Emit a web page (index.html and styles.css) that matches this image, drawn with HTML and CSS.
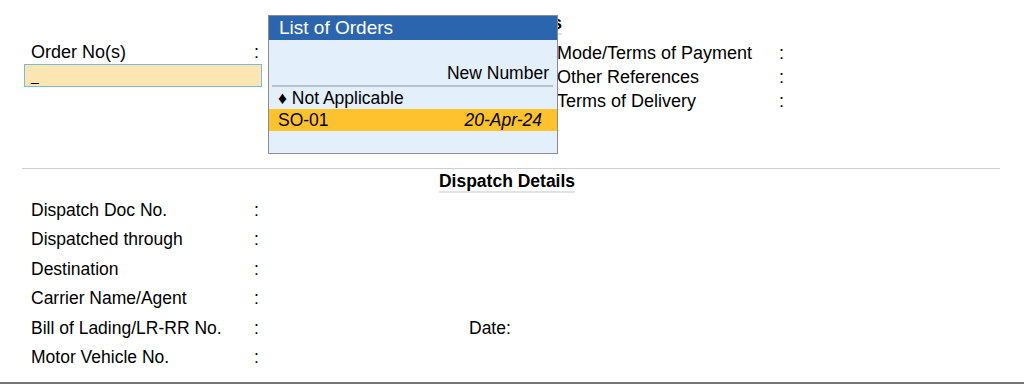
FILE: index.html
```html
<!DOCTYPE html>
<html>

<head>
    <meta charset="UTF-8">
    <title>Order Details</title>
    <link rel="stylesheet" href="styles.css">
</head>

<body>
    <div class="voucher">
        <div class="order-section">
            <div class="section-title"><span>Order Details</span></div>
            <div class="order-cols">
                <div class="order-left">
                    <div class="field">
                        <span class="label">Order No(s)</span>
                        <span class="colon">:</span>
                    </div>
                    <div class="input-box"><span class="cursor">_</span></div>
                </div>
                <div class="order-right">
                    <div class="field-r">
                        <span class="label-r">Mode/Terms of Payment</span>
                        <span class="colon">:</span>
                    </div>
                    <div class="field-r">
                        <span class="label-r">Other References</span>
                        <span class="colon">:</span>
                    </div>
                    <div class="field-r">
                        <span class="label-r">Terms of Delivery</span>
                        <span class="colon">:</span>
                    </div>
                </div>
            </div>

            <!-- popup list over the form -->
            <div class="popup">
                <div class="popup-head">List of Orders</div>
                <div class="popup-body">
                    <div class="popup-new">New Number</div>
                    <div class="popup-sep"></div>
                    <div class="popup-row"><span>&#9830; Not Applicable</span></div>
                    <div class="popup-row selected">
                        <span>SO-01</span>
                        <span class="popup-date">20-Apr-24</span>
                    </div>
                </div>
            </div>
        </div>

        <div class="dispatch-section">
            <div class="section-title"><span>Dispatch Details</span></div>
            <div class="dispatch-rows">
                <div class="d-row"><span class="label">Dispatch Doc No.</span><span class="colon">:</span></div>
                <div class="d-row"><span class="label">Dispatched through</span><span class="colon">:</span></div>
                <div class="d-row"><span class="label">Destination</span><span class="colon">:</span></div>
                <div class="d-row"><span class="label">Carrier Name/Agent</span><span class="colon">:</span></div>
                <div class="d-row"><span class="label">Bill of Lading/LR-RR No.</span><span class="colon">:</span><span>Date:</span></div>
                <div class="d-row"><span class="label">Motor Vehicle No.</span><span class="colon">:</span></div>
            </div>
        </div>
    </div>
</body>

</html>
```

FILE: styles.css
```css
* {
    padding: 0;
    margin: 0;
    box-sizing: border-box;
}

body {
    background: #FFFFFF;
    font-family: "Liberation Sans", Arial, sans-serif;
    font-size: 17.5px;
    color: #000000;
}

.voucher {
    width: 1024px;
    height: 384px;
    border-bottom: 2px solid #767676;
}

.order-section {
    position: relative;
    margin-left: 22px;
    width: 978px;
    height: 169px;
    padding-top: 13px;
    border-bottom: 1px solid #CFCFCF;
}

.section-title {
    text-align: center;
    padding-right: 8px;
    line-height: 20px;
    font-weight: bold;
}

.section-title span {
    display: inline-block;
    border-bottom: 2px solid #E2E2E2;
}

.order-cols {
    display: flex;
    margin-top: 6px;
    font-size: 18px;
}

.order-left {
    width: 238px;
    margin-left: 2px;
}

.field {
    display: flex;
    height: 23px;
    line-height: 22px;
    padding-left: 7px;
}

.label {
    width: 223px;
}

.input-box {
    height: 23px;
    border: 1px solid #79B9DE;
    background: #FEE6B2;
    padding-left: 6px;
    line-height: 20px;
}

.cursor {
    font-size: 14px;
}

.order-right {
    margin-left: 295px;
}

.field-r {
    display: flex;
    height: 24px;
    line-height: 24px;
}

.label-r {
    width: 222px;
}

.popup {
    position: absolute;
    left: 246px;
    top: 15px;
    width: 290px;
    height: 139px;
    border: 1px solid #8C8C8C;
    background: #E3EFFA;
}

.popup-head {
    height: 24px;
    line-height: 24px;
    background: #2B65AE;
    color: #FFFFFF;
    font-size: 19px;
    padding-left: 10px;
}

.popup-body {
    padding-top: 22px;
}

.popup-new {
    text-align: right;
    padding-right: 8px;
    height: 23px;
    line-height: 23px;
}

.popup-sep {
    margin: 0 4px 0 3px;
    border-top: 2px solid #B9C2CB;
}

.popup-row {
    display: flex;
    justify-content: space-between;
    height: 22px;
    line-height: 22px;
    padding: 0 15px 0 9px;
}

.selected {
    background: #FEC22F;
}

.popup-date {
    font-style: italic;
}

.dispatch-section {
    margin-left: 22px;
    width: 978px;
    padding-top: 2px;
}

.dispatch-rows {
    margin-top: 3px;
}

.d-row {
    display: grid;
    grid-template-columns: 223px 215px auto;
    height: 29.4px;
    line-height: 29.4px;
    padding-left: 9px;
}
```
